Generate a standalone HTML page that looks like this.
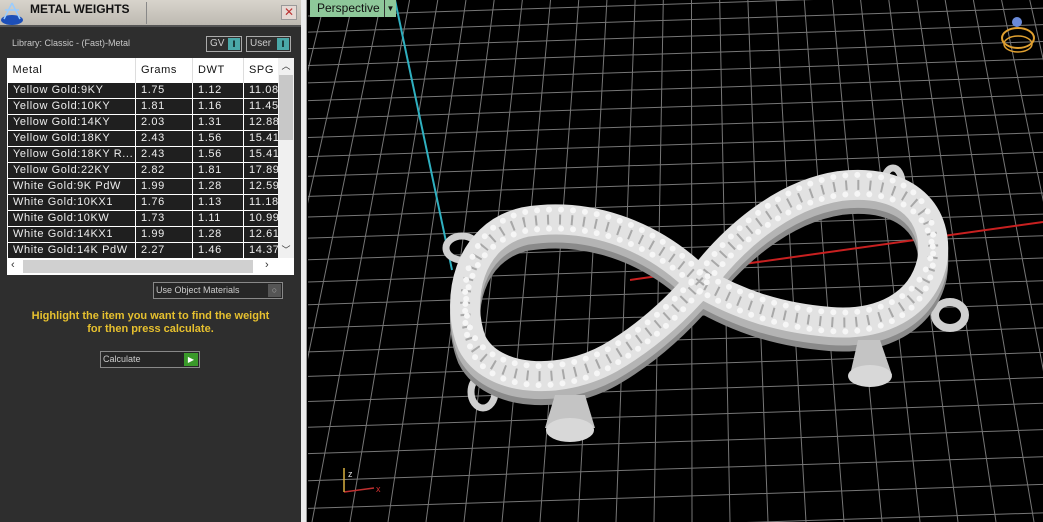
<!DOCTYPE html>
<html><head><meta charset="utf-8"><style>
*{margin:0;padding:0;box-sizing:border-box}
html,body{width:1043px;height:522px;overflow:hidden}
body{background:#000;font-family:"Liberation Sans",sans-serif;position:relative}
svg{display:block}
#panel{position:absolute;left:0;top:0;width:301px;height:522px;background:#2e2e2e;overflow:hidden}
#strip{position:absolute;left:301px;top:0;width:6px;height:522px;background:#ececec;border-right:1px solid #9a9a9a}
#title{position:absolute;left:0;top:0;width:301px;height:27px;background:linear-gradient(#d8d4cc,#bdb9b1);border-bottom:2px solid #555}
#title .t{position:absolute;left:30px;top:2px;font-weight:bold;font-size:12px;color:#111}
#title .sep{position:absolute;left:146px;top:2px;width:1px;height:22px;background:#888}
#close{position:absolute;left:281px;top:5px;width:16px;height:15px;background:#e6d9d4;border:1px solid #999;color:#b33;font-size:12px;line-height:12px;text-align:center}
.lib{position:absolute;left:12px;top:38px;font-size:9px;color:#c8c8c8}
.tog{position:absolute;top:36px;height:16px;border:1px solid #aaa;font-size:10px;color:#ccc;padding-left:3px;line-height:14px}
.tog b{position:absolute;right:1px;top:1px;width:12px;height:12px;background:#4aa8a8;color:#000;font-size:9px;text-align:center;line-height:12px}
#tbl{position:absolute;left:7px;top:58px;width:287px;height:217px;background:#fff;overflow:hidden}
table{position:absolute;left:0;top:0;border-collapse:collapse;font-size:11px;letter-spacing:0.6px;color:#eee}
td{height:16px;border:1px solid #fff;background:#1f1f1f;padding-left:5px;white-space:nowrap;overflow:hidden}
th{height:24px;background:#fff;color:#111;font-weight:normal;text-align:left;padding-left:5px;border-right:1px solid #ddd}
.vs{position:absolute;left:271px;top:0;width:16px;height:200px;background:#f0f0f0}
.hs{position:absolute;left:0;top:200px;width:287px;height:17px;background:#fff}
.yel{position:absolute;left:0;width:301px;text-align:center;color:#e6c02e;font-weight:bold;font-size:11px}
.box{position:absolute;border:1px solid #888;font-size:9px;color:#ccc;padding-left:2px;background:#262626}
#vp{position:absolute;left:308px;top:0;width:735px;height:522px;overflow:hidden}
#persp{position:absolute;left:310px;top:0;width:86px;height:17px;background:#8ec89a;font-size:12px;color:#111;padding-left:7px;line-height:17px}
#persp i{position:absolute;right:0;top:0;width:12px;height:17px;border-left:1px solid #333;font-style:normal;font-size:8px;text-align:center}
</style></head><body>
<div id="vp"><svg id="g" width="735" height="522" viewBox="308 0 735 522"></svg></div>
<div id="panel">
 <div id="title">
  <svg style="position:absolute;left:0;top:0" width="26" height="27"><ellipse cx="12" cy="20" rx="11" ry="5" fill="#1d4fb8"/><path d="M12 3 L4 19 M12 3 L20 19 M5 10 H19" stroke="#9cf" stroke-width="1.5" fill="none"/></svg>
  <div class="t">METAL WEIGHTS</div><div class="sep"></div><div id="close">✕</div>
 </div>
 <div class="lib">Library: Classic - (Fast)-Metal</div>
 <div class="tog" style="left:206px;width:36px">GV<b>I</b></div>
 <div class="tog" style="left:246px;width:45px">User<b>I</b></div>
 <div id="tbl">
  <table>
   <tr><th style="width:128px">Metal</th><th style="width:57px">Grams</th><th style="width:51px">DWT</th><th style="width:36px">SPG</th></tr>
   <tr><td>Yellow Gold:9KY</td><td>1.75</td><td>1.12</td><td>11.08</td></tr>
   <tr><td>Yellow Gold:10KY</td><td>1.81</td><td>1.16</td><td>11.45</td></tr>
   <tr><td>Yellow Gold:14KY</td><td>2.03</td><td>1.31</td><td>12.88</td></tr>
   <tr><td>Yellow Gold:18KY</td><td>2.43</td><td>1.56</td><td>15.41</td></tr>
   <tr><td>Yellow Gold:18KY R...</td><td>2.43</td><td>1.56</td><td>15.41</td></tr>
   <tr><td>Yellow Gold:22KY</td><td>2.82</td><td>1.81</td><td>17.89</td></tr>
   <tr><td>White Gold:9K PdW</td><td>1.99</td><td>1.28</td><td>12.59</td></tr>
   <tr><td>White Gold:10KX1</td><td>1.76</td><td>1.13</td><td>11.18</td></tr>
   <tr><td>White Gold:10KW</td><td>1.73</td><td>1.11</td><td>10.99</td></tr>
   <tr><td>White Gold:14KX1</td><td>1.99</td><td>1.28</td><td>12.61</td></tr>
   <tr><td>White Gold:14K PdW</td><td>2.27</td><td>1.46</td><td>14.37</td></tr>
  </table>
  <div class="vs"><div style="position:absolute;top:1px;width:16px;text-align:center;font-size:9px;color:#333">︿</div><div style="position:absolute;top:17px;left:1px;width:14px;height:65px;background:#c8c8c8"></div><div style="position:absolute;top:185px;width:16px;text-align:center;font-size:9px;color:#333">﹀</div></div>
  <div class="hs"><span style="position:absolute;left:4px;top:1px;font-size:11px;color:#333">‹</span><div style="position:absolute;left:16px;top:2px;width:230px;height:13px;background:#d0d0d0"></div><span style="position:absolute;left:258px;top:1px;font-size:11px;color:#333">›</span></div>
 </div>
 <div class="box" style="left:153px;top:282px;width:130px;height:17px;line-height:15px">Use Object Materials<span style="position:absolute;right:1px;top:1px;width:13px;height:13px;background:#555;color:#aaa;font-size:9px;text-align:center;line-height:13px">○</span></div>
 <div class="yel" style="top:310px">Highlight the item you want to find the weight</div>
 <div class="yel" style="top:323px">for then press calculate.</div>
 <div class="box" style="left:100px;top:351px;width:100px;height:17px;line-height:15px">Calculate<span style="position:absolute;right:1px;top:1px;width:14px;height:13px;background:#3a9a2a;color:#fff;font-size:8px;text-align:center;line-height:13px">▶</span></div>
</div>
<div id="strip"></div>
<div id="persp">Perspective<i>▼</i></div>
<script>
var s='',g=document.getElementById('g');
var vx=690,vy=-1500;
for(var x0=-600;x0<=2000;x0+=38){var t=(0-522)/(vy-522);var xt=x0+(vx-x0)*t;s+='<line x1="'+x0+'" y1="522" x2="'+xt+'" y2="0" stroke="#767676" stroke-width="1"/>';}
var y=4;while(y<560){s+='<line x1="308" y1="'+(y+12)+'" x2="1043" y2="'+(y-12)+'" stroke="#767676" stroke-width="1"/>';y+=16+0.025*y;}
s+='<line x1="395" y1="0" x2="452" y2="270" stroke="#2fb0c0" stroke-width="2"/>';
s+='<line x1="630" y1="280" x2="1043" y2="222" stroke="#c82020" stroke-width="2"/>';
var P="M700,282 C650,232 585,212 525,222 C468,235 455,300 472,343 C492,382 560,386 610,358 C650,335 680,305 700,282 C730,242 780,195 840,186 C908,178 940,215 932,262 C922,306 880,326 830,322 C780,318 740,305 700,282 Z";
s+='<ellipse cx="462" cy="248" rx="16" ry="12" fill="none" stroke="#d0d0d0" stroke-width="7"/>';
s+='<ellipse cx="483" cy="392" rx="12" ry="16" fill="none" stroke="#cfcfcf" stroke-width="7"/>';
s+='<ellipse cx="893" cy="183" rx="9" ry="15" fill="none" stroke="#d0d0d0" stroke-width="7"/>';
s+='<ellipse cx="950" cy="315" rx="15" ry="13" fill="none" stroke="#d0d0d0" stroke-width="8"/>';
s+='<path d="'+P+'" transform="translate(0,14)" fill="none" stroke="#8a8a8a" stroke-width="30"/>';
s+='<path d="'+P+'" transform="translate(0,8)" fill="none" stroke="#b4b4b4" stroke-width="30"/>';
s+='<path d="'+P+'" fill="none" stroke="#e2e2e2" stroke-width="30"/>';
s+='<path d="'+P+'" fill="none" stroke="#a8a8a8" stroke-width="10" stroke-dasharray="2 10"/>';
s+='<path d="'+P+'" fill="none" stroke="#f6f6f6" stroke-width="6" stroke-linecap="round" stroke-dasharray="0 12" transform="translate(0,-10)"/>';
s+='<path d="'+P+'" fill="none" stroke="#f6f6f6" stroke-width="6" stroke-linecap="round" stroke-dasharray="0 12" transform="translate(0,9)"/>';
s+='<path d="M555,395 L545,428 L595,428 L585,395 Z" fill="#c4c4c4"/><ellipse cx="570" cy="430" rx="24" ry="12" fill="#d8d8d8"/>';
s+='<path d="M858,340 L850,375 L892,375 L880,340 Z" fill="#c4c4c4"/><ellipse cx="870" cy="376" rx="22" ry="11" fill="#d8d8d8"/>';
s+='<line x1="344" y1="492" x2="374" y2="488" stroke="#c03030" stroke-width="1.5"/><line x1="344" y1="492" x2="344" y2="468" stroke="#d8b040" stroke-width="1.5"/><text x="376" y="492" fill="#d03030" font-size="9" font-family="Liberation Sans">x</text><text x="348" y="477" fill="#ddd" font-size="9" font-family="Liberation Sans">z</text>';
s+='<ellipse cx="1018" cy="38" rx="16" ry="10" fill="none" stroke="#e0a030" stroke-width="2"/><ellipse cx="1018" cy="44" rx="14" ry="8" fill="none" stroke="#e0a030" stroke-width="1.5"/><circle cx="1017" cy="22" r="5" fill="#6a8ad8"/>';
g.innerHTML=s;
</script>
</body></html>
